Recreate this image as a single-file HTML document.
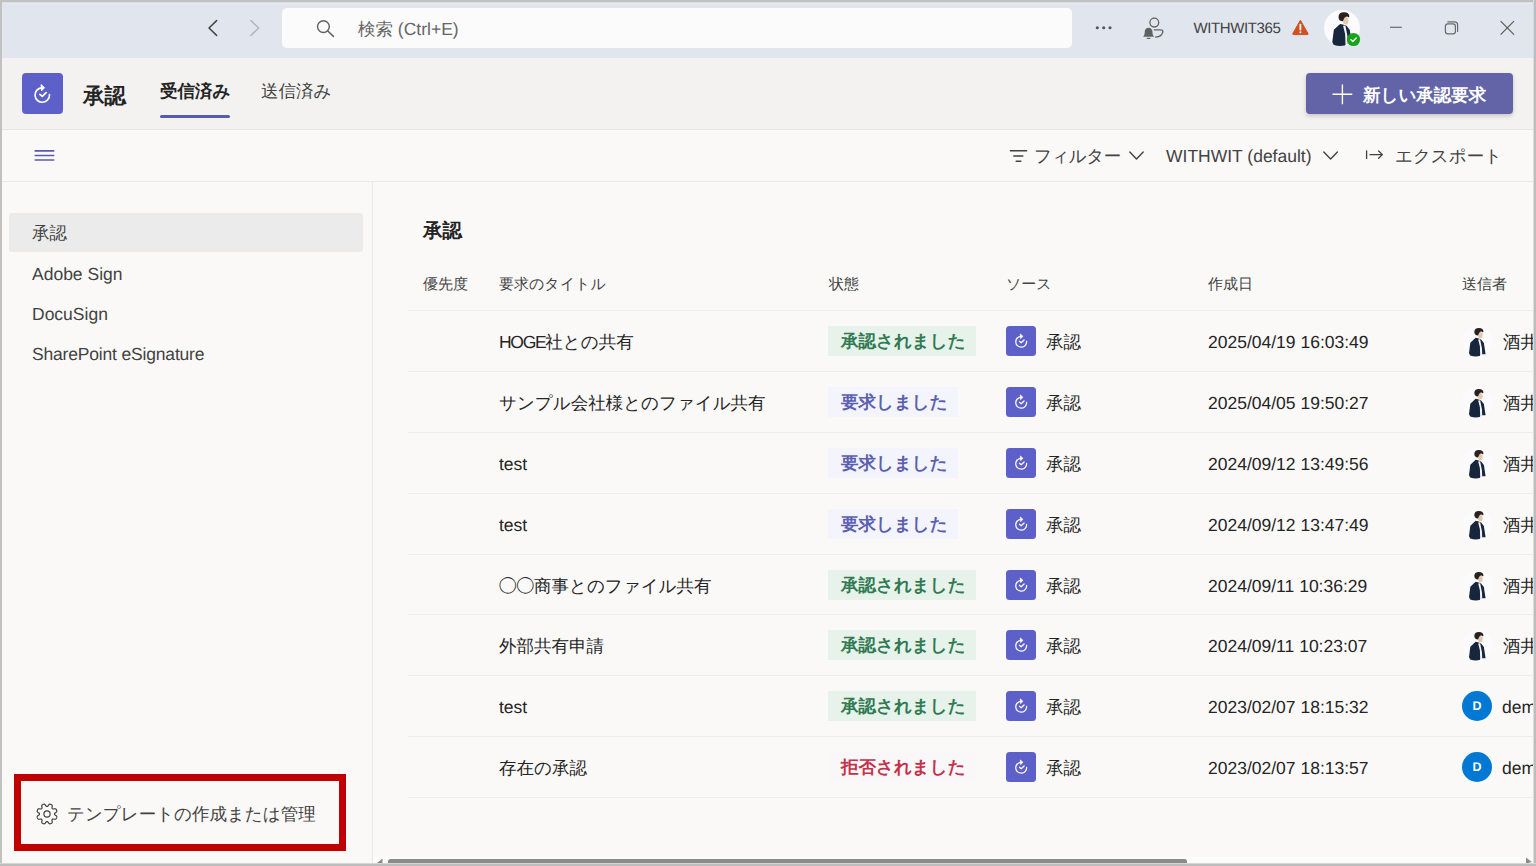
<!DOCTYPE html>
<html lang="ja">
<head>
<meta charset="utf-8">
<title>承認 | Microsoft Teams</title>
<style>
*{box-sizing:border-box;margin:0;padding:0}
html,body{width:1536px;height:866px;overflow:hidden}
body{position:relative;background:#faf9f8;font-family:"Liberation Sans",sans-serif;font-size:17.5px;color:#242424;line-height:1;text-rendering:geometricPrecision}
.abs{position:absolute}
.t{position:absolute;white-space:nowrap;line-height:20px;height:20px}
svg{position:absolute;overflow:visible}
/* window frame */
#frame-t{left:0;top:0;width:1536px;height:2px;background:#c1c1c1}
#frame-l{left:0;top:0;width:2px;height:866px;background:#c1c1c1}
#frame-r{left:1533px;top:0;width:3px;height:866px;background:linear-gradient(90deg,#dcdcdc 0,#dcdcdc 1px,#bdbdbd 1px,#bdbdbd 3px)}
#frame-r2{left:1533px;top:2px;width:1px;height:56px;background:#c9dbea}
#frame-b{left:0;top:863px;width:1536px;height:3px;background:linear-gradient(180deg,#d6d6d6 0,#d6d6d6 1px,#bdbdbd 1px,#bdbdbd 3px)}
/* title bar */
#titlebar{left:2px;top:2px;width:1531px;height:56px;background:linear-gradient(180deg,#dcdfe3 0,#dcdfe3 1px,#e3e8ed 1px,#e3e8ed 3px,#e1e6ee 3px)}
#search{left:282px;top:8px;width:790px;height:40px;background:#fbfbfb;border-radius:5px}
/* header */
#header{left:2px;top:58px;width:1531px;height:72px;background:#f3f2f1;border-bottom:1px solid #e7e6e4}
#toolbar{left:2px;top:130px;width:1531px;height:52px;background:#faf9f8;border-bottom:1px solid #eae9e8}
#appicon{left:22px;top:73px;width:40.5px;height:41px;background:#5c60c8;border-radius:4px}
#newbtn{left:1306.3px;top:73.4px;width:206.6px;height:40.3px;background:#6264a7;border-radius:4px;box-shadow:0 2px 4px rgba(0,0,0,.18)}
#tabline{left:160px;top:115px;width:70px;height:3px;background:#565ab1;border-radius:1.5px}
/* sidebar */
#sideborder{left:372px;top:182px;width:1px;height:681px;background:#e9e8e7}
#sel{left:9px;top:213px;width:354px;height:39px;background:#ebebeb;border-radius:3px}
#redbox{left:14px;top:774px;width:332px;height:77px;border:7px solid #c00000}
/* table */
.hl{position:absolute;left:408px;width:1125px;height:1px;background:#efeeec}
.badge{position:absolute;left:828px;height:30px;line-height:30px;padding-left:13px;font-weight:bold;white-space:nowrap;overflow:hidden}
.ok{width:148px;background:#e7f2ea;color:#2f7a53}
.req{width:130px;background:#f4f4fc;color:#5b5fb0}
.ng{width:148px;background:#f9f7f7;color:#c4314b}
.src{position:absolute;left:1006px;width:30px;height:30.5px;background:#5c60c8;border-radius:3.5px}
.dav{position:absolute;left:1462px;width:30px;height:30px;border-radius:50%;background:#0078d4;color:#fff;font-weight:bold;font-size:12.5px;line-height:31px;text-align:center}
</style>
</head>
<body>
<svg width="0" height="0" style="left:0;top:0">
<defs>
<symbol id="appr" viewBox="0 0 40 40" overflow="visible">
  <path d="M27.5 20.6 A7.25 7.25 0 1 1 19.6 13.8" fill="none" stroke="#fff" stroke-width="1.7" stroke-linecap="round"/>
  <path d="M19 10.6 L22.5 13.7 L19.6 16.8 Z" fill="#fff" stroke="#fff" stroke-width="1" stroke-linejoin="round"/>
  <path d="M17.9 20.4 L20.3 22.4 L24.1 18.6" fill="none" stroke="#fff" stroke-width="1.7" stroke-linecap="round" stroke-linejoin="round"/>
</symbol>
<symbol id="person" viewBox="0 0 30 30" overflow="visible">
  <circle cx="15" cy="15" r="15" fill="#fbfbfd"/>
  <path d="M13.4 11.6 L8.2 16.4 L6.9 26.6 L8 28.9 Q12.5 30.6 17.4 29.6 L18.5 27.9 L23.2 27.9 L21.5 16.7 L18.8 13.2 L15.6 12 Z" fill="#17263c"/>
  <path d="M15.9 13.2 L17.8 13 L19.6 22 L19.9 28 L17.9 28.6 L17.6 20 Z" fill="#f2f4f8"/>
  <ellipse cx="18" cy="9" rx="2.3" ry="3.1" fill="#e6c8b0"/>
  <path d="M12.1 6 Q12 2 16.6 1.9 Q21.2 2 21.1 5.6 Q20.6 6.6 19.8 5.6 Q18 5.2 16.8 6.8 Q16.2 8.6 15.6 9.4 Q12.3 9.4 12.1 6 Z" fill="#2b211d"/>
</symbol>
</defs>
</svg>
<!-- TITLE BAR -->
<div class="abs" id="titlebar"></div>
<div class="abs" id="search"></div>
<svg style="left:0;top:0" width="1536" height="58" viewBox="0 0 1536 58" fill="none">
  <!-- nav chevrons -->
  <path d="M216.6 20.6 L209 28 L216.6 35.4" stroke="#424242" stroke-width="1.5" stroke-linecap="round" stroke-linejoin="round"/>
  <path d="M251 20.6 L258.6 28 L251 35.4" stroke="#b3b6bb" stroke-width="1.5" stroke-linecap="round" stroke-linejoin="round"/>
  <!-- search icon -->
  <circle cx="323.4" cy="26.6" r="5.9" stroke="#616161" stroke-width="1.4"/>
  <path d="M327.8 31 L333.4 36.4" stroke="#616161" stroke-width="1.5" stroke-linecap="round"/>
  <!-- more dots -->
  <circle cx="1097.3" cy="27.7" r="1.55" fill="#555"/><circle cx="1103.7" cy="27.7" r="1.55" fill="#555"/><circle cx="1110" cy="27.7" r="1.55" fill="#555"/>
  <!-- person + bell -->
  <circle cx="1154.3" cy="22.6" r="4.4" stroke="#616161" stroke-width="1.3"/>
  <path d="M1154.3 29.8 L1160.4 29.8 Q1163 29.8 1162.8 31.8 Q1162 36.6 1155.6 37.2" stroke="#616161" stroke-width="1.3" stroke-linecap="round"/>
  <path d="M1143 36.7 C1144.6 35.4 1144.7 33.5 1144.7 32 C1144.7 29.4 1146.3 27.8 1148.6 27.8 C1150.9 27.8 1152.5 29.4 1152.5 32 C1152.5 33.5 1152.6 35.4 1154.2 36.7 Z" fill="#616161"/>
  <path d="M1147.4 38.4 L1149.8 38.4" stroke="#616161" stroke-width="1.2" stroke-linecap="round"/>
  <!-- warning -->
  <path d="M1300.4 20.2 L1308 33.6 Q1308.4 34.6 1307.2 34.6 L1293.6 34.6 Q1292.4 34.6 1292.8 33.6 Z" fill="#d2501f" stroke="#d2501f" stroke-width="1" stroke-linejoin="round"/>
  <path d="M1300.4 24.6 L1300.4 29.6" stroke="#fff" stroke-width="1.8" stroke-linecap="round"/><circle cx="1300.4" cy="32.2" r="1" fill="#fff"/>
  <!-- window controls -->
  <path d="M1390 27.3 L1401.8 27.3" stroke="#6a6a6a" stroke-width="1.2"/>
  <rect x="1445.4" y="23.8" width="10" height="10" rx="2.4" stroke="#6a6a6a" stroke-width="1.2"/>
  <path d="M1447.8 21.8 L1454.6 21.8 Q1457.6 21.8 1457.6 24.8 L1457.6 31.4" stroke="#6a6a6a" stroke-width="1.2" stroke-linecap="round"/>
  <path d="M1500.6 21.2 L1514 34.6 M1514 21.2 L1500.6 34.6" stroke="#5a5a5a" stroke-width="1.2"/>
</svg>
<!-- profile avatar -->
<svg style="left:1324px;top:9.6px" width="36" height="36" viewBox="0 0 30 30"><use href="#person"/></svg>
<svg style="left:1346px;top:32px" width="15" height="15" viewBox="0 0 15 15" fill="none">
  <circle cx="7.5" cy="7.5" r="6.6" fill="#18a418"/>
  <path d="M4.9 7.7 L6.8 9.5 L10.2 5.9" stroke="#fff" stroke-width="1.4" stroke-linecap="round" stroke-linejoin="round"/>
</svg>
<div class="t" style="left:358px;top:18.7px;color:#656565" id="stxt">検索 (Ctrl+E)</div>
<div class="t" style="left:1193.5px;top:19px;font-size:15px;letter-spacing:-0.4px;color:#424242" id="org">WITHWIT365</div>

<!-- HEADER -->
<div class="abs" id="header"></div>
<div class="abs" id="appicon"></div>
<svg style="left:22px;top:73.5px" width="40" height="40" viewBox="0 0 40 40"><use href="#appr"/></svg>
<div class="t" style="left:83px;top:84px;font-size:21.5px;font-weight:bold;line-height:24px;height:24px" id="apptitle">承認</div>
<div class="t" style="left:160px;top:81px;font-weight:bold" id="tab1">受信済み</div>
<div class="t" style="left:261px;top:81px;color:#424242" id="tab2">送信済み</div>
<div class="abs" id="tabline"></div>
<div class="abs" id="newbtn"></div>
<svg style="left:1332px;top:83.5px" width="21" height="21" viewBox="0 0 21 21" fill="none"><path d="M10.4 0.4 L10.4 20.2 M0.5 10.3 L20.3 10.3" stroke="#fff" stroke-width="1.4"/></svg>
<div class="t" style="left:1363px;top:84.8px;font-weight:bold;color:#fff" id="newtxt">新しい承認要求</div>

<!-- TOOLBAR -->
<div class="abs" id="toolbar"></div>
<svg style="left:0;top:130px" width="1536" height="51" viewBox="0 130 1536 51" fill="none">
  <!-- hamburger -->
  <path d="M35.2 150.9 L53.7 150.9 M35.2 155.5 L53.7 155.5 M35.2 160 L53.7 160" stroke="#595bab" stroke-width="1.6" stroke-linecap="round"/>
  <!-- filter -->
  <path d="M1010.4 150.8 L1026.6 150.8 M1013.8 156 L1022.8 156 M1016.2 161.2 L1020.8 161.2" stroke="#424242" stroke-width="1.5" stroke-linecap="round"/>
  <!-- chevrons -->
  <path d="M1129.8 152 L1136.5 159 L1143.2 152" stroke="#424242" stroke-width="1.4" stroke-linecap="round" stroke-linejoin="round"/>
  <path d="M1323.8 152 L1330.6 159 L1337.4 152" stroke="#424242" stroke-width="1.4" stroke-linecap="round" stroke-linejoin="round"/>
  <!-- export -->
  <path d="M1366.6 150.8 L1366.6 158.4 M1370 154.6 L1382.2 154.6 M1378.6 151 L1382.4 154.6 L1378.6 158.2" stroke="#424242" stroke-width="1.3" stroke-linecap="round" stroke-linejoin="round"/>
</svg>
<div class="t" style="left:1034px;top:146px;letter-spacing:-0.5px;color:#424242" id="flt">フィルター</div>
<div class="t" style="left:1166px;top:146px;color:#424242" id="env">WITHWIT (default)</div>
<div class="t" style="left:1395px;top:146px;color:#424242" id="exp">エクスポート</div>

<!-- SIDEBAR -->
<div class="abs" id="sideborder"></div>
<div class="abs" id="sel"></div>
<div class="t" style="left:32px;top:223px;color:#424242">承認</div>
<div class="t" style="left:32px;top:264.3px;color:#424242" id="s2">Adobe Sign</div>
<div class="t" style="left:32px;top:304px;color:#424242" id="s3">DocuSign</div>
<div class="t" style="left:32px;top:343.6px;letter-spacing:-0.18px;color:#424242" id="s4">SharePoint eSignature</div>
<div class="abs" id="redbox"></div>
<svg style="left:36.7px;top:803.9px" width="20" height="20" viewBox="0 0 20 20" fill="none">
  <path d="M10.00 2.45 L10.24 2.43 L10.48 2.37 L10.74 2.22 L11.02 1.92 L11.36 1.41 L11.75 0.83 L12.14 0.41 L12.51 0.22 L12.85 0.19 L13.17 0.23 L13.49 0.32 L13.79 0.42 L14.09 0.55 L14.38 0.69 L14.66 0.85 L14.92 1.05 L15.14 1.31 L15.26 1.71 L15.25 2.28 L15.11 2.97 L14.99 3.56 L14.98 3.98 L15.06 4.26 L15.19 4.48 L15.34 4.66 L15.52 4.81 L15.74 4.94 L16.02 5.02 L16.44 5.01 L17.03 4.89 L17.72 4.75 L18.29 4.74 L18.69 4.86 L18.95 5.08 L19.15 5.34 L19.31 5.62 L19.45 5.91 L19.58 6.21 L19.68 6.51 L19.77 6.83 L19.81 7.15 L19.78 7.49 L19.59 7.86 L19.17 8.25 L18.59 8.64 L18.08 8.98 L17.78 9.26 L17.63 9.52 L17.57 9.76 L17.55 10.00 L17.57 10.24 L17.63 10.48 L17.78 10.74 L18.08 11.02 L18.59 11.36 L19.17 11.75 L19.59 12.14 L19.78 12.51 L19.81 12.85 L19.77 13.17 L19.68 13.49 L19.58 13.79 L19.45 14.09 L19.31 14.38 L19.15 14.66 L18.95 14.92 L18.69 15.14 L18.29 15.26 L17.72 15.25 L17.03 15.11 L16.44 14.99 L16.02 14.98 L15.74 15.06 L15.52 15.19 L15.34 15.34 L15.19 15.52 L15.06 15.74 L14.98 16.02 L14.99 16.44 L15.11 17.03 L15.25 17.72 L15.26 18.29 L15.14 18.69 L14.92 18.95 L14.66 19.15 L14.38 19.31 L14.09 19.45 L13.79 19.58 L13.49 19.68 L13.17 19.77 L12.85 19.81 L12.51 19.78 L12.14 19.59 L11.75 19.17 L11.36 18.59 L11.02 18.08 L10.74 17.78 L10.48 17.63 L10.24 17.57 L10.00 17.55 L9.76 17.57 L9.52 17.63 L9.26 17.78 L8.98 18.08 L8.64 18.59 L8.25 19.17 L7.86 19.59 L7.49 19.78 L7.15 19.81 L6.83 19.77 L6.51 19.68 L6.21 19.58 L5.91 19.45 L5.62 19.31 L5.34 19.15 L5.08 18.95 L4.86 18.69 L4.74 18.29 L4.75 17.72 L4.89 17.03 L5.01 16.44 L5.02 16.02 L4.94 15.74 L4.81 15.52 L4.66 15.34 L4.48 15.19 L4.26 15.06 L3.98 14.98 L3.56 14.99 L2.97 15.11 L2.28 15.25 L1.71 15.26 L1.31 15.14 L1.05 14.92 L0.85 14.66 L0.69 14.38 L0.55 14.09 L0.42 13.79 L0.32 13.49 L0.23 13.17 L0.19 12.85 L0.22 12.51 L0.41 12.14 L0.83 11.75 L1.41 11.36 L1.92 11.02 L2.22 10.74 L2.37 10.48 L2.43 10.24 L2.45 10.00 L2.43 9.76 L2.37 9.52 L2.22 9.26 L1.92 8.98 L1.41 8.64 L0.83 8.25 L0.41 7.86 L0.22 7.49 L0.19 7.15 L0.23 6.83 L0.32 6.51 L0.42 6.21 L0.55 5.91 L0.69 5.62 L0.85 5.34 L1.05 5.08 L1.31 4.86 L1.71 4.74 L2.28 4.75 L2.97 4.89 L3.56 5.01 L3.98 5.02 L4.26 4.94 L4.48 4.81 L4.66 4.66 L4.81 4.48 L4.94 4.26 L5.02 3.98 L5.01 3.56 L4.89 2.97 L4.75 2.28 L4.74 1.71 L4.86 1.31 L5.08 1.05 L5.34 0.85 L5.62 0.69 L5.91 0.55 L6.21 0.42 L6.51 0.32 L6.83 0.23 L7.15 0.19 L7.49 0.22 L7.86 0.41 L8.25 0.83 L8.64 1.41 L8.98 1.92 L9.26 2.22 L9.52 2.37 L9.76 2.43 Z" stroke="#424242" stroke-width="1.2" stroke-linejoin="round"/>
  <circle cx="10" cy="10" r="3.1" stroke="#424242" stroke-width="1.2"/>
</svg>
<div class="t" style="left:67px;top:804px;color:#424242" id="tmpl">テンプレートの作成または管理</div>

<!-- MAIN -->
<div class="t" style="left:423px;top:219.5px;font-size:19.5px;font-weight:bold;line-height:22px;height:22px" id="h1">承認</div>
<div class="t" style="left:423px;top:274.5px;font-size:15px;color:#424242">優先度</div>
<div class="t" style="left:499px;top:274.5px;font-size:15px;color:#424242">要求のタイトル</div>
<div class="t" style="left:829px;top:274.5px;font-size:15px;color:#424242">状態</div>
<div class="t" style="left:1006px;top:274.5px;font-size:15px;color:#424242">ソース</div>
<div class="t" style="left:1208px;top:274.5px;font-size:15px;color:#424242">作成日</div>
<div class="t" style="left:1462px;top:274.5px;font-size:15px;color:#424242">送信者</div>
<div class="hl" style="top:310px"></div>

<div id="rows">
<!-- row 1 -->
<div class="t" style="left:499px;top:332.3px"><span style="letter-spacing:-1.3px">HOGE</span>社との共有</div>
<div class="badge ok" style="top:326.1px">承認されました</div>
<div class="src" style="top:325.8px"></div><svg style="left:1006px;top:325.8px" width="30" height="30" viewBox="0 0 40 40"><use href="#appr"/></svg>
<div class="t" style="left:1046px;top:332.3px">承認</div>
<div class="t" style="left:1208px;top:332.3px">2025/04/19 16:03:49</div>
<svg style="left:1461.5px;top:326.4px" width="30.5" height="30.5" viewBox="0 0 30 30"><use href="#person"/></svg>
<div class="t snd" style="left:1503px;top:332.3px">酒井 太郎</div>
<div class="hl" style="top:371px"></div>
<!-- row 2 -->
<div class="t" style="left:499px;top:393.3px">サンプル会社様とのファイル共有</div>
<div class="badge req" style="top:387.1px">要求しました</div>
<div class="src" style="top:386.8px"></div><svg style="left:1006px;top:386.8px" width="30" height="30" viewBox="0 0 40 40"><use href="#appr"/></svg>
<div class="t" style="left:1046px;top:393.3px">承認</div>
<div class="t" style="left:1208px;top:393.3px">2025/04/05 19:50:27</div>
<svg style="left:1461.5px;top:387.4px" width="30.5" height="30.5" viewBox="0 0 30 30"><use href="#person"/></svg>
<div class="t snd" style="left:1503px;top:393.3px">酒井 太郎</div>
<div class="hl" style="top:432px"></div>
<!-- row 3 -->
<div class="t" style="left:499px;top:454.3px">test</div>
<div class="badge req" style="top:448.1px">要求しました</div>
<div class="src" style="top:447.8px"></div><svg style="left:1006px;top:447.8px" width="30" height="30" viewBox="0 0 40 40"><use href="#appr"/></svg>
<div class="t" style="left:1046px;top:454.3px">承認</div>
<div class="t" style="left:1208px;top:454.3px">2024/09/12 13:49:56</div>
<svg style="left:1461.5px;top:448.4px" width="30.5" height="30.5" viewBox="0 0 30 30"><use href="#person"/></svg>
<div class="t snd" style="left:1503px;top:454.3px">酒井 太郎</div>
<div class="hl" style="top:493px"></div>
<!-- row 4 -->
<div class="t" style="left:499px;top:515.3px">test</div>
<div class="badge req" style="top:509.1px">要求しました</div>
<div class="src" style="top:508.8px"></div><svg style="left:1006px;top:508.8px" width="30" height="30" viewBox="0 0 40 40"><use href="#appr"/></svg>
<div class="t" style="left:1046px;top:515.3px">承認</div>
<div class="t" style="left:1208px;top:515.3px">2024/09/12 13:47:49</div>
<svg style="left:1461.5px;top:509.4px" width="30.5" height="30.5" viewBox="0 0 30 30"><use href="#person"/></svg>
<div class="t snd" style="left:1503px;top:515.3px">酒井 太郎</div>
<div class="hl" style="top:554px"></div>
<!-- row 5 -->
<div class="t" style="left:499px;top:576.3px">◯◯商事とのファイル共有</div>
<div class="badge ok" style="top:570.1px">承認されました</div>
<div class="src" style="top:569.8px"></div><svg style="left:1006px;top:569.8px" width="30" height="30" viewBox="0 0 40 40"><use href="#appr"/></svg>
<div class="t" style="left:1046px;top:576.3px">承認</div>
<div class="t" style="left:1208px;top:576.3px">2024/09/11 10:36:29</div>
<svg style="left:1461.5px;top:570.4px" width="30.5" height="30.5" viewBox="0 0 30 30"><use href="#person"/></svg>
<div class="t snd" style="left:1503px;top:576.3px">酒井 太郎</div>
<div class="hl" style="top:614px"></div>
<!-- row 6 -->
<div class="t" style="left:499px;top:636.3px">外部共有申請</div>
<div class="badge ok" style="top:630.1px">承認されました</div>
<div class="src" style="top:629.8px"></div><svg style="left:1006px;top:629.8px" width="30" height="30" viewBox="0 0 40 40"><use href="#appr"/></svg>
<div class="t" style="left:1046px;top:636.3px">承認</div>
<div class="t" style="left:1208px;top:636.3px">2024/09/11 10:23:07</div>
<svg style="left:1461.5px;top:630.4px" width="30.5" height="30.5" viewBox="0 0 30 30"><use href="#person"/></svg>
<div class="t snd" style="left:1503px;top:636.3px">酒井 太郎</div>
<div class="hl" style="top:675px"></div>
<!-- row 7 -->
<div class="t" style="left:499px;top:697.3px">test</div>
<div class="badge ok" style="top:691.1px">承認されました</div>
<div class="src" style="top:690.8px"></div><svg style="left:1006px;top:690.8px" width="30" height="30" viewBox="0 0 40 40"><use href="#appr"/></svg>
<div class="t" style="left:1046px;top:697.3px">承認</div>
<div class="t" style="left:1208px;top:697.3px">2023/02/07 18:15:32</div>
<div class="dav" style="top:691.4px">D</div>
<div class="t snd" style="left:1502px;top:697.3px">demo</div>
<div class="hl" style="top:736px"></div>
<!-- row 8 -->
<div class="t" style="left:499px;top:758.3px">存在の承認</div>
<div class="badge ng" style="top:752.1px">拒否されました</div>
<div class="src" style="top:751.8px"></div><svg style="left:1006px;top:751.8px" width="30" height="30" viewBox="0 0 40 40"><use href="#appr"/></svg>
<div class="t" style="left:1046px;top:758.3px">承認</div>
<div class="t" style="left:1208px;top:758.3px">2023/02/07 18:13:57</div>
<div class="dav" style="top:752.4px">D</div>
<div class="t snd" style="left:1502px;top:758.3px">demo</div>
<div class="hl" style="top:797px"></div>
<!--rows-end--></div>

<!-- SCROLLBAR -->
<div class="abs" style="left:373px;top:857px;width:1160px;height:6px;background:#fcfcfb"></div>
<div class="abs" style="left:388px;top:859px;width:799px;height:5px;background:#8b8b8b;border-radius:2.5px 2.5px 0 0"></div>
<svg style="left:376px;top:858px" width="8" height="6" viewBox="0 0 8 6"><path d="M6.5 0.5 L1 5 L6.5 6 Z" fill="#8a8a8a"/></svg>
<svg style="left:1525px;top:857px" width="8" height="7" viewBox="0 0 8 7"><path d="M1 0.5 L6.8 5 L1 6.5 Z" fill="#8a8a8a"/></svg>
<!-- FRAME -->
<div class="abs" id="frame-t"></div>
<div class="abs" id="frame-l"></div>
<div class="abs" id="frame-r"></div>
<div class="abs" id="frame-r2"></div>
<div class="abs" id="frame-b"></div>
</body>
</html>
